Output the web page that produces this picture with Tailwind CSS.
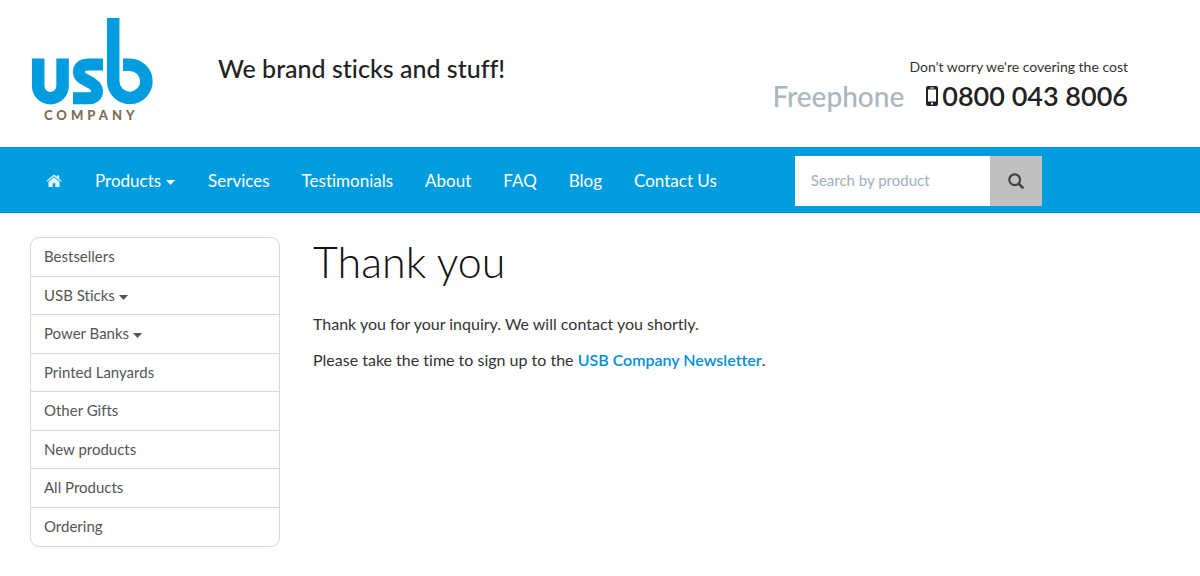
<!DOCTYPE html>
<html lang="en">
<head>
<meta charset="utf-8">
<meta name="viewport" content="width=device-width, initial-scale=1">
<title>Thank you - USB Company</title>
<script src="https://cdn.jsdelivr.net/npm/@tailwindcss/browser@4"></script>
</head>
<body class="min-h-screen bg-white font-['Lato',sans-serif] text-base text-[#333] [font-variant-ligatures:no-common-ligatures]">
<header class="flex items-start pt-4 pr-[72px] pb-5 pl-[30px]">
  <a href="#" aria-label="USB Company home" class="shrink-0">
    <svg width="124" height="111" viewBox="0 0 124 111">
      <!-- Brand mark: cable-like strokes -->
      <g fill="none" stroke="#009ce0" stroke-width="12.500">
        <path d="M8.200 42.500V70a12.200 12.200 0 0 0 24.400 0V42.500"/>
        <path stroke-width="12" d="M73 48.500H59C48 48.500 45.500 58 53 62.500L62 67.500C70 72.500 68 82.300 59 82.300H43"/>
        <path d="M93 48.700H99A16.600 16.600 0 1 1 83.200 65.500V2"/>
      </g>
      <text y="104" fill="#7d6b58" font-family="Lato,sans-serif" font-weight="900" font-size="13" class="tracking-[4px]" x="14">COMPANY</text>
    </svg>
  </a>
  <p class="mt-9 ml-16 text-[25px] leading-8 font-medium text-[#222]">We brand sticks and stuff!</p>
  <div class="mt-10 ml-auto text-right">
    <p class="text-sm leading-[22px]">Don't worry we're covering the cost</p>
    <p class="flex items-center text-[27px] leading-9 font-semibold text-[#222]">
      <span class="mr-[22px] text-[28px] font-medium text-[#aab7c1]">Freephone</span>
      <svg class="mr-1" width="12" height="20" viewBox="0 0 12 20" aria-hidden="true"><rect width="12" height="20" rx="2" fill="#222"/><path d="M2 3.500h8v12H2z" fill="#fff"/><path d="M4 2h4" stroke="#fff"/><circle cx="6" cy="17.700" r="1.100" fill="#fff"/></svg>
      <span>0800 043 8006</span>
    </p>
  </div>
</header>
<nav class="flex h-[66px] items-center border-b border-[#0088d0] bg-[#009ce0] pt-0.5 pl-[46px] text-[17px] text-white">
  <ul class="flex items-center gap-[33px]">
    <li><a href="#" aria-label="Home" class="block"><svg width="16" height="14" viewBox="0 0 16 14" fill="#e0f6ff" aria-hidden="true"><path d="M8 3.200 2.500 7.800V12.500q0 .5.5.5H6.700V9.300H9.300V13H13q.5 0 .5-.5V7.800z"/><path d="M13.200 5V1.200h-2v1.900L8.700 1Q8 .5 7.300 1L.3 6.900l.8.900L8 2.200l6.900 5.600.8-.9z"/></svg></a></li>
    <li><a href="#" class="flex items-center gap-[5px]">Products <svg class="mt-1" width="9" height="5" viewBox="0 0 9 5" fill="currentColor" aria-hidden="true"><path d="M0 0h9L4.500 5z"/></svg></a></li>
    <li><ul class="flex items-center gap-8">
      <li><a href="#">Services</a></li>
      <li><a href="#">Testimonials</a></li>
      <li><a href="#">About</a></li>
      <li><a href="#">FAQ</a></li>
      <li><a href="#">Blog</a></li>
      <li><a href="#">Contact Us</a></li>
    </ul></li>
  </ul>
  <form class="ml-[78px] flex h-[50px]" role="search">
    <input type="search" aria-label="Search by product" placeholder="Search by product" class="w-[195px] bg-white px-4 text-[15px] text-[#333] placeholder:text-[#a0aebb]">
    <button type="button" aria-label="Search" class="flex w-[52px] items-center justify-center bg-[#c0c0c0]"><svg width="16" height="16" viewBox="0 0 16 16" fill="none" stroke="#444" stroke-linecap="round" aria-hidden="true"><circle cx="6.700" cy="6.700" r="5.400" stroke-width="2.200"/><path d="m11 11 3.500 3.500" stroke-width="2.600"/></svg></button>
  </form>
</nav>
<div class="flex items-start gap-[33px] px-[30px] pt-6">
  <ul class="grid min-h-[310px] w-[250px] shrink-0 auto-rows-fr divide-y divide-[#d8d8d8] rounded-[9px] border border-[#d8d8d8] text-[15px] leading-[37px] text-[#555]">
    <li><a href="#" class="block px-[13px]">Bestsellers</a></li>
    <li><a href="#" class="flex items-center gap-1 px-[13px]">USB Sticks <svg class="mt-1" width="9" height="5" viewBox="0 0 9 5" fill="currentColor" aria-hidden="true"><path d="M0 0h9L4.500 5z"/></svg></a></li>
    <li><a href="#" class="flex items-center gap-1 px-[13px]">Power Banks <svg class="mt-1" width="9" height="5" viewBox="0 0 9 5" fill="currentColor" aria-hidden="true"><path d="M0 0h9L4.500 5z"/></svg></a></li>
    <li><a href="#" class="block px-[13px]">Printed Lanyards</a></li>
    <li><a href="#" class="block px-[13px]">Other Gifts</a></li>
    <li><a href="#" class="block px-[13px]">New products</a></li>
    <li><a href="#" class="block px-[13px]">All Products</a></li>
    <li><a href="#" class="block px-[13px]">Ordering</a></li>
  </ul>
  <main>
    <h1 class="text-[43px] leading-[50px] font-light text-[#111]">Thank you</h1>
    <p class="mt-[25px] leading-6">Thank you for your inquiry. We will contact you shortly.</p>
    <p class="mt-3 leading-6">Please take the time to sign up to the <a href="#" class="font-semibold text-[#0090d8]">USB Company Newsletter</a>.</p>
  </main>
</div>
</body>
</html>
